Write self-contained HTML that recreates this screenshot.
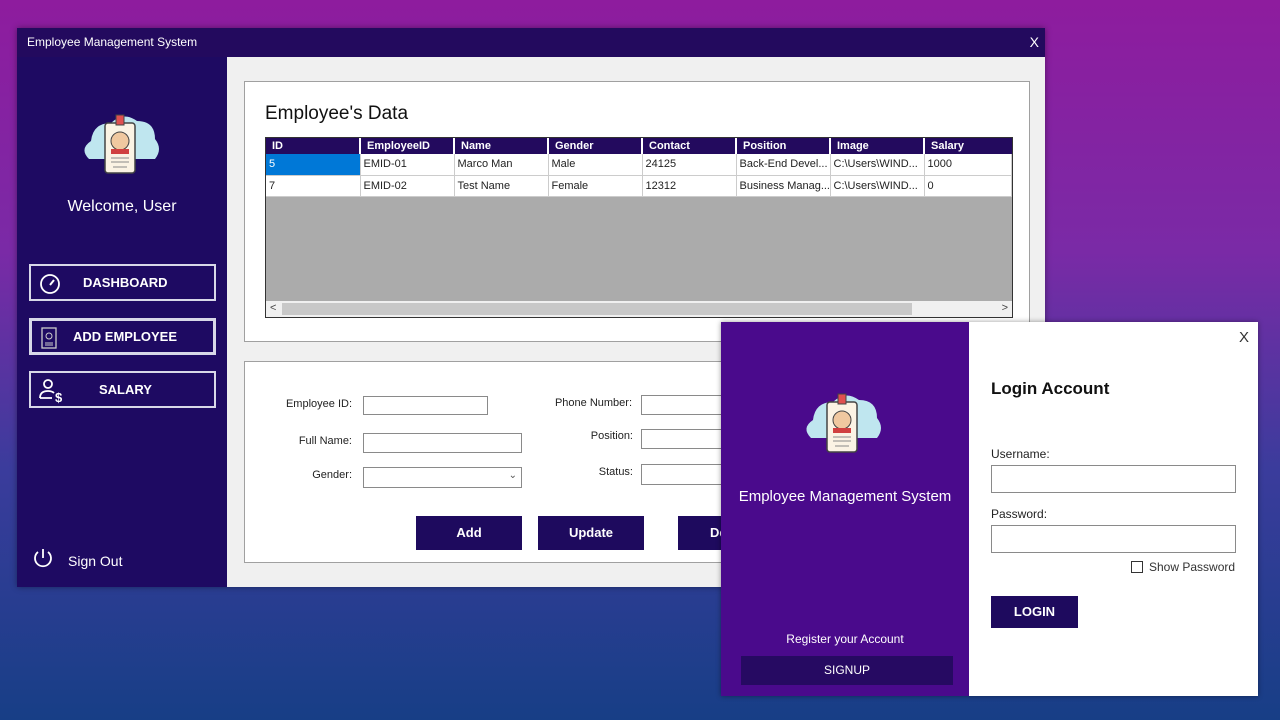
<!DOCTYPE html>
<html><head><meta charset="utf-8"><style>
*{box-sizing:border-box;margin:0;padding:0}
body{width:1280px;height:720px;overflow:hidden;position:relative;font-family:"Liberation Sans",sans-serif;background:linear-gradient(180deg,#8e1c9e 0%,#7a2aa6 35%,#3b3c9c 65%,#173e86 100%)}
.abs{position:absolute}
.win{left:17px;top:28px;width:1028px;height:559px;background:#f0f0f0;box-shadow:0 0 6px rgba(0,0,0,.4)}
.title{left:0;top:0;width:1028px;height:29px;background:#230a5e;color:#fff;font-size:12px;line-height:29px;padding-left:10px}
.side{left:0;top:29px;width:210px;height:530px;background:#1e0a62}
.btn{position:absolute;left:12px;width:187px;height:37px;border:2px solid #d8d8e8;color:#fff;font-weight:bold;font-size:13px;line-height:33px}
.panel{background:#fff;border:1px solid #a0a0a0}
table{border-collapse:collapse;font-size:11px;font-family:"Liberation Sans",sans-serif;table-layout:fixed}
th{background:#230a5e;color:#fff;text-align:left;font-weight:bold;height:16px;padding-left:6px;border-left:2px solid #fff;white-space:nowrap}
td{height:21px;padding-left:3px;border-right:1px solid #ccc;border-bottom:1px solid #ccc;color:#222;white-space:nowrap;overflow:hidden}
.lbl{position:absolute;font-size:11px;color:#222;text-align:right}
.inp{position:absolute;background:#fff;border:1px solid #8a8a8a}
.pb{position:absolute;background:#1e0a5e;color:#fff;font-weight:bold;font-size:13px;text-align:center;line-height:34px;height:34px}
</style></head><body>
<div class="abs win">
 <div class="abs title">Employee Management System<span style="position:absolute;right:6px;font-size:14px">X</span></div>
 <div class="abs side">
  <svg class="abs" style="left:62px;top:52px" width="84" height="72" viewBox="0 0 84 72"><path d="M10 50 Q0 40 12 32 Q14 14 32 14 Q44 2 58 12 Q76 12 76 30 Q84 40 76 50 Z" fill="#bfe6ef"/><rect x="26" y="14" width="30" height="50" rx="3" fill="#fbf3e4" stroke="#444" stroke-width="1.5"/><rect x="37" y="6" width="8" height="10" fill="#e05050" stroke="#444"/><circle cx="41" cy="32" r="9" fill="#f0c8a0" stroke="#444"/><path d="M32 40 h18 v5 h-18z" fill="#d04040"/><path d="M32 49h18M32 53h18M34 58h14" stroke="#888"/></svg>
  <div class="abs" style="left:0;width:210px;top:141px;text-align:center;color:#fff;font-size:16px">Welcome, User</div>
  <div class="btn" style="top:207px"><svg class="abs" style="left:8px;top:7px" width="22" height="22" viewBox="0 0 22 22"><circle cx="11" cy="11" r="9" fill="none" stroke="#fff" stroke-width="1.8"/><path d="M11 12 L15 7" stroke="#fff" stroke-width="2"/></svg><span style="position:absolute;left:52px">DASHBOARD</span></div>
  <div class="btn" style="top:261px;border-width:3px;line-height:31px"><svg class="abs" style="left:8px;top:4px" width="18" height="24" viewBox="0 0 18 24"><rect x="2" y="3" width="14" height="20" fill="none" stroke="#ccc" stroke-width="1.3"/><circle cx="9" cy="11" r="3" fill="none" stroke="#ccc"/><path d="M5 18h8M5 20h8" stroke="#ccc"/></svg><span style="position:absolute;left:41px">ADD EMPLOYEE</span></div>
  <div class="btn" style="top:314px"><svg class="abs" style="left:7px;top:5px" width="28" height="26" viewBox="0 0 28 26"><circle cx="10" cy="6" r="4" fill="none" stroke="#fff" stroke-width="1.8"/><path d="M2 20 Q2 13 10 13 Q14 13 16 15 M2 20h12" fill="none" stroke="#fff" stroke-width="1.8"/><text x="17" y="24" fill="#fff" font-size="13" font-weight="bold" font-family="Liberation Sans">$</text></svg><span style="position:absolute;left:68px">SALARY</span></div>
  <svg class="abs" style="left:15px;top:490px" width="22" height="22" viewBox="0 0 22 22"><path d="M6 5 A8 8 0 1 0 16 5" fill="none" stroke="#fff" stroke-width="1.8"/><path d="M11 2v9" stroke="#fff" stroke-width="1.8"/></svg>
  <div class="abs" style="left:51px;top:496px;color:#fff;font-size:14px">Sign Out</div>
 </div>
 <div class="abs panel" style="left:227px;top:53px;width:786px;height:261px">
  <div class="abs" style="left:20px;top:21px;font-size:19px;color:#111">Employee's Data</div>
  <div class="abs" style="left:20px;top:55px;width:748px;height:181px;border:1px solid #333;background:#ababab;overflow:hidden">
   <table style="width:746px;background:#fff">
    <tr><th style="width:94px;border-left:0">ID</th><th style="width:94px">EmployeeID</th><th style="width:94px">Name</th><th style="width:94px">Gender</th><th style="width:94px">Contact</th><th style="width:94px">Position</th><th style="width:94px">Image</th><th>Salary</th></tr>
    <tr><td style="background:#0078d7;color:#fff">5</td><td>EMID-01</td><td>Marco Man</td><td>Male</td><td>24125</td><td>Back-End Devel...</td><td>C:\Users\WIND...</td><td>1000</td></tr>
    <tr><td>7</td><td>EMID-02</td><td>Test Name</td><td>Female</td><td>12312</td><td>Business Manag...</td><td>C:\Users\WIND...</td><td>0</td></tr>
   </table>
   <div class="abs" style="left:0;bottom:0;width:746px;height:16px;background:#f0f0f0;font-size:11px;color:#444"><span style="position:absolute;left:4px;top:1px">&lt;</span><div class="abs" style="left:16px;top:2px;width:630px;height:12px;background:#c8c8c8"></div><span style="position:absolute;right:4px;top:1px">&gt;</span></div>
  </div>
 </div>
 <div class="abs panel" style="left:227px;top:333px;width:500px;height:202px;border-right:0">
  <div class="lbl" style="left:0;width:107px;top:36px">Employee ID:</div><div class="inp" style="left:118px;top:34px;width:125px;height:19px"></div>
  <div class="lbl" style="left:0;width:107px;top:73px">Full Name:</div><div class="inp" style="left:118px;top:71px;width:159px;height:20px"></div>
  <div class="lbl" style="left:0;width:107px;top:107px">Gender:</div><div class="inp" style="left:118px;top:105px;width:159px;height:21px"><span style="position:absolute;right:4px;top:2px;font-size:10px;color:#555">&#8964;</span></div>
  <div class="lbl" style="left:290px;width:97px;top:35px">Phone Number:</div><div class="inp" style="left:396px;top:33px;width:120px;height:20px"></div>
  <div class="lbl" style="left:290px;width:98px;top:68px">Position:</div><div class="inp" style="left:396px;top:67px;width:120px;height:20px"></div>
  <div class="lbl" style="left:290px;width:98px;top:104px">Status:</div><div class="inp" style="left:396px;top:102px;width:120px;height:21px"></div>
  <div class="pb" style="left:171px;top:154px;width:106px">Add</div>
  <div class="pb" style="left:293px;top:154px;width:106px">Update</div>
  <div class="pb" style="left:433px;top:154px;width:80px;text-align:left;padding-left:32px">De</div>
 </div>
</div>
<div class="abs" style="left:721px;top:322px;width:537px;height:374px;background:#fff;box-shadow:0 0 5px rgba(0,0,0,.4)">
 <div class="abs" style="left:0;top:0;width:248px;height:374px;background:#4a0a8c">
  <svg class="abs" style="left:80px;top:66px" width="84" height="72" viewBox="0 0 84 72"><path d="M10 50 Q0 40 12 32 Q14 14 32 14 Q44 2 58 12 Q76 12 76 30 Q84 40 76 50 Z" fill="#bfe6ef"/><rect x="26" y="14" width="30" height="50" rx="3" fill="#fbf3e4" stroke="#444" stroke-width="1.5"/><rect x="37" y="6" width="8" height="10" fill="#e05050" stroke="#444"/><circle cx="41" cy="32" r="9" fill="#f0c8a0" stroke="#444"/><path d="M32 40 h18 v5 h-18z" fill="#d04040"/><path d="M32 49h18M32 53h18M34 58h14" stroke="#888"/></svg>
  <div class="abs" style="left:0;width:248px;top:166px;text-align:center;color:#fff;font-size:15px">Employee Management System</div>
  <div class="abs" style="left:0;width:248px;top:310px;text-align:center;color:#fff;font-size:12px">Register your Account</div>
  <div class="abs" style="left:20px;top:334px;width:212px;height:29px;background:#260a62;color:#fff;font-size:12px;text-align:center;line-height:29px">SIGNUP</div>
 </div>
 <div class="abs" style="right:9px;top:7px;font-size:15px;color:#333">X</div>
 <div class="abs" style="left:270px;top:57px;font-size:17px;font-weight:bold;color:#111">Login Account</div>
 <div class="abs" style="left:270px;top:125px;font-size:12px;color:#222">Username:</div>
 <div class="inp" style="left:270px;top:143px;width:245px;height:28px"></div>
 <div class="abs" style="left:270px;top:185px;font-size:12px;color:#222">Password:</div>
 <div class="inp" style="left:270px;top:203px;width:245px;height:28px"></div>
 <div class="abs" style="left:410px;top:239px;width:12px;height:12px;border:1px solid #333"></div>
 <div class="abs" style="left:428px;top:238px;font-size:12px;color:#333">Show Password</div>
 <div class="pb" style="left:270px;top:274px;width:87px;height:32px;line-height:32px">LOGIN</div>
</div>
</body></html>
